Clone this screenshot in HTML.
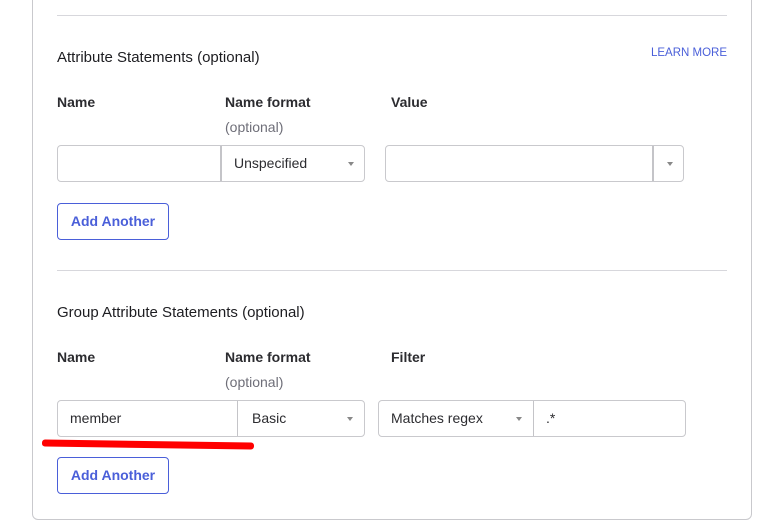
<!DOCTYPE html>
<html><head><meta charset="utf-8"><style>
*{box-sizing:border-box;margin:0;padding:0}
body{width:778px;height:530px;background:#fff;position:relative;overflow:hidden;font-family:"Liberation Sans",sans-serif;color:#1d1d21}
.a{position:absolute}
.card{left:32px;top:-10px;width:720px;height:530px;border:1px solid #c9c9cd;border-radius:6px}
.sep{height:1px;background:#d7d7dc;left:57px;width:670px}
.h{font-size:15px;color:#1d1d21}
.lbl{font-size:14px;font-weight:bold;color:#2c2c30}
.opt{font-size:14px;color:#6e6e78}
.box{border:1px solid #c9c9cd;border-radius:4px;height:37px;font-size:14px;color:#2c2c30;line-height:35px;padding-left:12px}
.vd{position:absolute;top:0;bottom:0;width:1px;background:#c4c4c8}
.car{position:absolute;width:0;height:0;border-left:3.5px solid transparent;border-right:3.5px solid transparent;border-top:4px solid #888}
.btn{border:1px solid #4a5fd9;border-radius:4px;width:112px;height:37px;color:#4a5fd9;font-weight:bold;font-size:14px;text-align:center;line-height:35px}
</style></head><body>
<div class="a card"></div>
<div class="a sep" style="top:15px"></div>
<div class="a h" style="left:57px;top:49px">Attribute Statements (optional)</div>
<div class="a" style="right:51px;top:47px;font-size:11.5px;color:#4a5fd9">LEARN MORE</div>
<div class="a lbl" style="left:57px;top:94px">Name</div>
<div class="a lbl" style="left:225px;top:94px">Name format</div>
<div class="a lbl" style="left:391px;top:94px">Value</div>
<div class="a opt" style="left:225px;top:119px">(optional)</div>
<div class="a box" style="left:57px;top:145px;width:308px"><div class="vd" style="left:162px;width:2px"></div><span class="a" style="left:176px">Unspecified</span><div class="car" style="left:290px;top:16px"></div></div>
<div class="a box" style="left:385px;top:145px;width:299px"><div class="vd" style="left:266px;width:2px"></div><div class="car" style="left:281px;top:16px"></div></div>
<div class="a btn" style="left:57px;top:203px">Add Another</div>
<div class="a sep" style="top:270px"></div>
<div class="a h" style="left:57px;top:304px">Group Attribute Statements (optional)</div>
<div class="a lbl" style="left:57px;top:349px">Name</div>
<div class="a lbl" style="left:225px;top:349px">Name format</div>
<div class="a lbl" style="left:391px;top:349px">Filter</div>
<div class="a opt" style="left:225px;top:374px">(optional)</div>
<div class="a box" style="left:57px;top:400px;width:308px">member<div class="vd" style="left:179px"></div><span class="a" style="left:194px">Basic</span><div class="car" style="left:289px;top:16px"></div></div>
<div class="a box" style="left:378px;top:400px;width:308px">Matches regex<div class="vd" style="left:154px"></div><div class="car" style="left:137px;top:16px"></div><span class="a" style="left:167px">.*</span></div>
<div class="a" style="left:42px;top:441px;width:212px;height:7px;background:#f00;border-radius:3px;transform:rotate(0.8deg)"></div>
<div class="a btn" style="left:57px;top:457px">Add Another</div>
</body></html>
